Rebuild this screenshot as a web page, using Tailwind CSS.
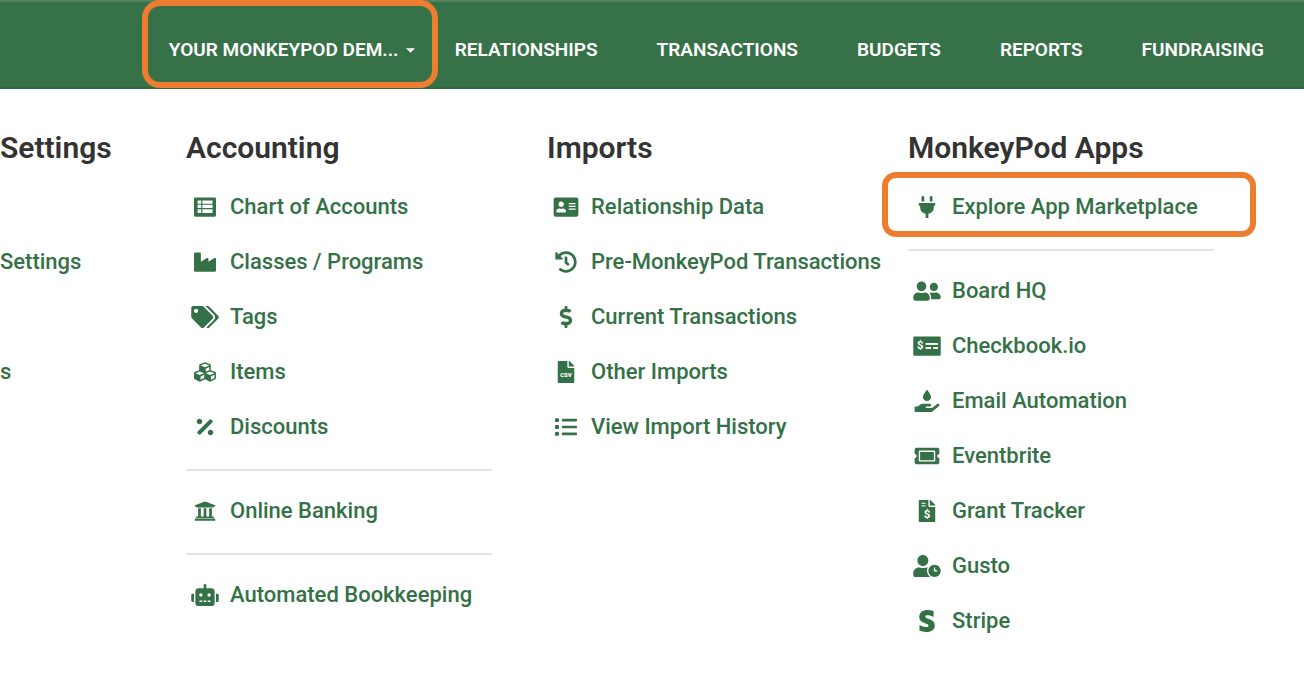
<!DOCTYPE html>
<html lang="en">
<head>
  <meta charset="UTF-8" />
  <meta name="viewport" content="width=device-width, initial-scale=1.0" />
  <title>MonkeyPod</title>
  <script src="https://cdn.jsdelivr.net/npm/@tailwindcss/browser@4"></script>
</head>
<body class="bg-white font-['Roboto',sans-serif] text-[#357147] overflow-x-hidden">
  <header class="h-[89px] flex items-start justify-end pr-10 bg-[#367147] border-b-2 border-[#2f6a40] shadow-[inset_0_2px_0_#56835f] text-white text-[19px] font-semibold">
    <button type="button" class="h-[88px] w-[296px] mr-[17px] pt-3 pl-[21px] flex items-center text-left border-6 border-[#ed7d31] rounded-[18px]">
      YOUR MONKEYPOD DEM...
      <svg class="w-[9px] h-[5px] ml-2" viewBox="0 0 10 5" fill="currentColor" aria-hidden="true"><path d="M0 0h10L5 5z"/></svg>
    </button>
    <nav class="h-[88px] pt-3 flex items-center gap-[59px]">
      <a href="#">RELATIONSHIPS</a>
      <a href="#">TRANSACTIONS</a>
      <a href="#">BUDGETS</a>
      <a href="#">REPORTS</a>
      <a href="#">FUNDRAISING</a>
    </nav>
  </header>

  <main class="pt-10 grid grid-cols-[186fr_361fr_361fr_396fr] text-[22px] font-medium whitespace-nowrap">
    <!-- Settings -->
    <section>
      <h2 class="h-[50px] leading-[38px] text-[30px] font-semibold text-[#333]">Settings</h2>
      <ul>
        <li class="h-[55px]"></li>
        <li><a href="#" class="h-[55px] flex items-center">Settings</a></li>
        <li class="h-[55px]"></li>
        <li><a href="#" class="h-[55px] flex items-center">s</a></li>
      </ul>
    </section>

    <!-- Accounting -->
    <section>
      <h2 class="h-[50px] leading-[38px] text-[30px] font-semibold text-[#333]">Accounting</h2>
      <ul>
        <li><a href="#" class="h-[55px] pl-[5px] flex items-center gap-[11px]">
          <svg class="w-7 h-[22px]" viewBox="0 0 512 512" fill="currentColor" fill-rule="evenodd" aria-hidden="true"><path d="M30 32h452a30 30 0 0 1 30 30v388a30 30 0 0 1-30 30H30a30 30 0 0 1-30-30V62a30 30 0 0 1 30-30zM84 104v74h84v-74zM194 104v74h238v-74zM84 206v74h84v-74zM194 206v74h238v-74zM84 308v88h84v-88zM194 308v88h238v-88z"/></svg>
          Chart of Accounts</a></li>
        <li><a href="#" class="h-[55px] pl-[5px] flex items-center gap-[11px]">
          <svg class="w-7 h-[22px]" viewBox="0 0 512 512" fill="currentColor" aria-hidden="true"><path d="M475.115 163.781L336 252.309v-68.28c0-18.916-20.931-30.399-36.885-20.248L160 252.309V56c0-13.255-10.745-24-24-24H24C10.745 32 0 42.745 0 56v400c0 13.255 10.745 24 24 24h464c13.255 0 24-10.745 24-24V184.029c0-18.917-20.931-30.399-36.885-20.248z"/></svg>
          Classes / Programs</a></li>
        <li><a href="#" class="h-[55px] pl-[5px] flex items-center gap-[11px]">
          <svg class="w-7 h-[22px]" viewBox="0 0 640 512" fill="currentColor" aria-hidden="true"><path d="M497.941 225.941L286.059 14.059A48 48 0 0 0 252.118 0H48C21.49 0 0 21.49 0 48v204.118a48 48 0 0 0 14.059 33.941l211.882 211.882c18.744 18.745 49.136 18.746 67.882 0l204.118-204.118c18.745-18.745 18.745-49.137 0-67.882zM112 160c-26.51 0-48-21.49-48-48s21.49-48 48-48 48 21.49 48 48-21.49 48-48 48zm513.941 133.823L421.823 497.941c-18.745 18.745-49.137 18.745-67.882 0l-.36-.36L527.64 323.522c16.999-16.999 26.36-39.6 26.36-63.64s-9.362-46.641-26.36-63.64L331.397 0h48.721a48 48 0 0 1 33.941 14.059l211.882 211.882c18.745 18.745 18.745 49.137 0 67.882z"/></svg>
          Tags</a></li>
        <li><a href="#" class="h-[55px] pl-[5px] flex items-center gap-[11px]">
          <svg class="w-7 h-[22px]" viewBox="0 0 512 512" fill="currentColor" aria-hidden="true"><path d="M488.6 250.2L392 214V105.5c0-15-9.3-28.4-23.4-33.7l-100-37.5c-8.1-3.1-17.1-3.1-25.3 0l-100 37.5c-14.1 5.3-23.4 18.7-23.4 33.7V214l-96.6 36.2C9.3 255.5 0 268.9 0 283.9V394c0 13.6 7.7 26.1 19.9 32.2l100 50c10.1 5.1 22.1 5.1 32.2 0l103.9-52 103.9 52c10.1 5.1 22.1 5.1 32.2 0l100-50c12.2-6.1 19.9-18.6 19.9-32.2V283.9c0-15-9.3-28.4-23.4-33.7zM358 214.8l-85 31.9v-68.2l85-37v73.3zM154 104.1l102-38.2 102 38.2v.6l-102 41.4-102-41.4v-.6zm84 291.1l-85 42.5v-79.1l85-38.8v75.4zm0-112l-102 41.4-102-41.4v-.6l102-38.2 102 38.2v.6zm240 112l-85 42.5v-79.1l85-38.8v75.4zm0-112l-102 41.4-102-41.4v-.6l102-38.2 102 38.2v.6z"/></svg>
          Items</a></li>
        <li><a href="#" class="h-[55px] pl-[5px] flex items-center gap-[11px]">
          <svg class="w-7 h-[22px]" viewBox="0 0 384 512" fill="currentColor" aria-hidden="true"><path d="M109.25 173.25c24.99-24.99 24.99-65.52 0-90.51-24.99-24.99-65.52-24.99-90.51 0-24.99 24.99-24.99 65.52 0 90.51 25 25 65.52 25 90.51 0zm256 165.49c-24.99-24.99-65.52-24.99-90.51 0-24.99 24.99-24.99 65.52 0 90.51 24.99 24.99 65.52 24.99 90.51 0 25-24.99 25-65.51 0-90.51zm-1.94-231.43l-22.62-22.62c-12.5-12.5-32.76-12.5-45.25 0L20.69 359.44c-12.5 12.5-12.5 32.76 0 45.25l22.62 22.62c12.5 12.5 32.76 12.5 45.25 0l274.75-274.75c12.5-12.49 12.5-32.75 0-45.25z"/></svg>
          Discounts</a></li>
      </ul>
      <hr class="w-[306px] mt-[15px] mb-3 border-t-2 border-[#e3e3e3]" />
      <a href="#" class="h-[55px] pl-[5px] flex items-center gap-[11px]">
        <svg class="w-7 h-[22px]" viewBox="0 0 512 512" fill="currentColor" aria-hidden="true"><path d="M496 128v16a8 8 0 0 1-8 8h-24v12c0 6.627-5.373 12-12 12H60c-6.627 0-12-5.373-12-12v-12H24a8 8 0 0 1-8-8v-16a8 8 0 0 1 4.941-7.392l232-88a7.996 7.996 0 0 1 6.118 0l232 88A8 8 0 0 1 496 128zm-24 304H40c-13.255 0-24 10.745-24 24v16a8 8 0 0 0 8 8h464a8 8 0 0 0 8-8v-16c0-13.255-10.745-24-24-24zM96 192v192H60c-6.627 0-12 5.373-12 12v20h416v-20c0-6.627-5.373-12-12-12h-36V192h-64v192h-64V192h-64v192h-64V192H96z"/></svg>
        Online Banking</a>
      <hr class="w-[306px] mt-[15px] mb-3 border-t-2 border-[#e3e3e3]" />
      <a href="#" class="h-[55px] pl-[5px] flex items-center gap-[11px]">
        <svg class="w-7 h-[22px]" viewBox="0 0 640 512" fill="currentColor" aria-hidden="true"><path d="M32,224H64V416H32A31.96166,31.96166,0,0,1,0,384V256A31.96166,31.96166,0,0,1,32,224Zm512-48V448a64.06328,64.06328,0,0,1-64,64H160a64.06328,64.06328,0,0,1-64-64V176a79.974,79.974,0,0,1,80-80H288V32a32,32,0,0,1,64,0V96H464A79.974,79.974,0,0,1,544,176ZM264,256a40,40,0,1,0-40,40A39.997,39.997,0,0,0,264,256Zm-8,128H192v32h64Zm96,0H288v32h64ZM456,256a40,40,0,1,0-40,40A39.997,39.997,0,0,0,456,256Zm-8,128H384v32h64ZM640,256V384a31.96166,31.96166,0,0,1-32,32H576V224h32A31.96166,31.96166,0,0,1,640,256Z"/></svg>
        Automated Bookkeeping</a>
    </section>

    <!-- Imports -->
    <section>
      <h2 class="h-[50px] leading-[38px] text-[30px] font-semibold text-[#333]">Imports</h2>
      <ul>
        <li><a href="#" class="h-[55px] pl-[5px] flex items-center gap-[11px]">
          <svg class="w-7 h-[22px]" viewBox="0 0 576 512" fill="currentColor" aria-hidden="true"><path d="M528 32H48C21.500 32 0 53.500 0 80v352c0 26.500 21.500 48 48 48h480c26.500 0 48-21.500 48-48V80c0-26.500-21.500-48-48-48zm-352 96c35.300 0 64 28.700 64 64s-28.700 64-64 64-64-28.700-64-64 28.700-64 64-64zm112 236.800c0 10.600-10 19.200-22.400 19.200H86.400C74 384 64 375.400 64 364.800v-19.200c0-31.800 30.100-57.600 67.200-57.600h5c12.300 5.100 25.700 8 39.800 8s27.600-2.900 39.800-8h5c37.100 0 67.200 25.800 67.200 57.600v19.200zM512 312c0 4.400-3.600 8-8 8H360c-4.400 0-8-3.600-8-8v-16c0-4.400 3.600-8 8-8h144c4.400 0 8 3.600 8 8v16zm0-64c0 4.400-3.600 8-8 8H360c-4.400 0-8-3.600-8-8v-16c0-4.400 3.600-8 8-8h144c4.400 0 8 3.600 8 8v16zm0-64c0 4.400-3.600 8-8 8H360c-4.400 0-8-3.600-8-8v-16c0-4.400 3.600-8 8-8h144c4.400 0 8 3.600 8 8v16z"/></svg>
          Relationship Data</a></li>
        <li><a href="#" class="h-[55px] pl-[5px] flex items-center gap-[11px]">
          <svg class="w-7 h-[22px]" viewBox="0 0 512 512" fill="currentColor" aria-hidden="true"><path d="M504 255.531c.253 136.640-111.180 248.372-247.820 248.468-59.015.042-113.223-20.530-155.822-54.911-11.077-8.940-11.905-25.541-1.839-35.607l11.267-11.267c8.609-8.609 22.353-9.551 31.891-1.984C173.062 425.135 212.781 440 256 440c101.705 0 184-82.311 184-184 0-101.705-82.311-184-184-184-48.814 0-93.149 18.969-126.068 49.932l50.754 50.754c10.080 10.080 2.941 27.314-11.313 27.314H24c-8.837 0-16-7.163-16-16V38.627c0-14.254 17.234-21.393 27.314-11.314l49.372 49.372C129.209 34.136 189.552 8 256 8c136.810 0 247.747 110.780 248 247.531zm-180.912 78.784l9.823-12.630c8.138-10.463 6.253-25.542-4.210-33.679L288 256.349V152c0-13.255-10.745-24-24-24h-16c-13.255 0-24 10.745-24 24v135.651l65.409 50.874c10.463 8.137 25.541 6.253 33.679-4.210z"/></svg>
          Pre-MonkeyPod Transactions</a></li>
        <li><a href="#" class="h-[55px] pl-[5px] flex items-center gap-[11px]">
          <svg class="w-7 h-[22px]" viewBox="0 0 288 512" fill="currentColor" aria-hidden="true"><path d="M209.200 233.400l-108-31.600C88.700 198.200 80 186.500 80 173.500c0-16.300 13.200-29.500 29.500-29.500h66.300c12.200 0 24.200 3.700 34.200 10.500 6.100 4.100 14.300 3.100 19.500-2l34.800-34c7.100-6.900 6.100-18.400-1.800-24.500C238 74.800 207.400 64.100 176 64V16c0-8.800-7.200-16-16-16h-32c-8.800 0-16 7.200-16 16v48h-2.500C45.800 64-5.400 118.700.5 183.600c4.200 46.100 39.400 83.600 83.800 96.600l102.500 30c12.500 3.700 21.200 15.300 21.200 28.300 0 16.300-13.200 29.500-29.500 29.500h-66.300C100 368 88 364.300 78 357.500c-6.100-4.100-14.300-3.100-19.500 2l-34.800 34c-7.100 6.900-6.100 18.400 1.800 24.500 24.500 19.200 55.100 29.900 86.500 30v48c0 8.800 7.200 16 16 16h32c8.800 0 16-7.200 16-16v-48.200c46.600-.9 90.300-28.600 105.700-72.700 21.500-61.600-14.600-124.800-72.500-141.700z"/></svg>
          Current Transactions</a></li>
        <li><a href="#" class="h-[55px] pl-[5px] flex items-center gap-[11px]">
          <svg class="w-7 h-[22px]" viewBox="0 0 384 512" fill="currentColor" aria-hidden="true"><path d="M224 136V0H24C10.700 0 0 10.700 0 24v464c0 13.300 10.700 24 24 24h336c13.300 0 24-10.700 24-24V160H248c-13.200 0-24-10.800-24-24zM384 121.900v6.100H256V0h6.100c6.400 0 12.500 2.500 17 7l97.900 98c4.500 4.500 7 10.600 7 16.900z"/><text x="192" y="368" text-anchor="middle" font-size="140" font-weight="900" fill="#fff">CSV</text></svg>
          Other Imports</a></li>
        <li><a href="#" class="h-[55px] pl-[5px] flex items-center gap-[11px]">
          <svg class="w-7 h-[22px]" viewBox="0 0 512 512" fill="currentColor" aria-hidden="true"><rect y="52" width="92" height="88" rx="18"/><rect y="212" width="92" height="88" rx="18"/><rect y="372" width="92" height="88" rx="18"/><rect x="160" y="66" width="352" height="60" rx="16"/><rect x="160" y="226" width="352" height="60" rx="16"/><rect x="160" y="386" width="352" height="60" rx="16"/></svg>
          View Import History</a></li>
      </ul>
    </section>

    <!-- Apps -->
    <section>
      <h2 class="h-[50px] leading-[38px] text-[30px] font-semibold text-[#333]">MonkeyPod Apps</h2>
      <a href="#" class="relative h-[55px] pl-[5px] flex items-center gap-[11px]">
        <span class="absolute -top-[7px] -left-[26px] w-[374px] h-[65px] border-6 border-[#ed7d31] rounded-[14px]"></span>
        <svg class="w-7 h-[22px]" viewBox="0 0 384 512" fill="currentColor" aria-hidden="true"><path d="M320,32a32,32,0,0,0-64,0v96h64Zm48,128H16A16,16,0,0,0,0,176v32a16,16,0,0,0,16,16H32v32A160.07,160.07,0,0,0,160,412.8V512h64V412.8A160.07,160.07,0,0,0,352,256V224h16a16,16,0,0,0,16-16V176A16,16,0,0,0,368,160ZM128,32a32,32,0,0,0-64,0v96h64Z"/></svg>
        Explore App Marketplace</a>
      <hr class="w-[306px] mt-[15px] mb-3 border-t-2 border-[#e3e3e3]" />
      <ul>
        <li><a href="#" class="h-[55px] pl-[5px] flex items-center gap-[11px]">
          <svg class="w-7 h-[22px]" viewBox="0 0 640 512" fill="currentColor" aria-hidden="true"><path d="M192 256c61.900 0 112-50.100 112-112S253.900 32 192 32 80 82.100 80 144s50.100 112 112 112zm76.800 32h-8.300c-20.800 10-43.900 16-68.500 16s-47.600-6-68.500-16h-8.300C51.600 288 0 339.600 0 403.200V432c0 26.500 21.500 48 48 48h288c26.500 0 48-21.500 48-48v-28.800c0-63.600-51.600-115.200-115.200-115.200zM480 256c53 0 96-43 96-96s-43-96-96-96-96 43-96 96 43 96 96 96zm48 32h-3.800c-13.900 4.800-28.600 8-44.200 8s-30.300-3.200-44.200-8H432c-20.400 0-39.200 5.900-55.700 15.400 24.400 26.300 39.700 61.200 39.700 99.800v38.400c0 2.200-.5 4.300-.6 6.400H592c26.500 0 48-21.500 48-48 0-61.900-50.100-112-112-112z"/></svg>
          Board HQ</a></li>
        <li><a href="#" class="h-[55px] pl-[5px] flex items-center gap-[11px]">
          <svg class="w-7 h-[22px]" viewBox="0 0 640 512" fill="currentColor" aria-hidden="true"><rect y="32" width="640" height="448" rx="24"/><g fill="#fff"><text x="164" y="336" text-anchor="middle" font-size="260" font-weight="700">$</text><rect x="288" y="186" width="288" height="44"/><rect x="288" y="280" width="128" height="44"/><rect x="464" y="280" width="112" height="44"/></g></svg>
          Checkbook.io</a></li>
        <li><a href="#" class="h-[55px] pl-[5px] flex items-center gap-[11px]">
          <svg class="w-7 h-[22px]" viewBox="0 0 576 512" fill="currentColor" aria-hidden="true"><path d="M288 256c53 0 96-42.100 96-94 0-40-57.100-120.700-83.200-155.600a16.100 16.100 0 0 0-25.600 0C249.100 41.300 192 122 192 162c0 51.900 43 94 96 94zM565.300 328.100c-11.800-10.700-30.200-10-42.600 0L430.300 402c-11.300 9.100-25.400 14-40 14H272c-8.800 0-16-7.200-16-16s7.200-16 16-16h78.300c15.900 0 30.700-10.900 33.300-26.600 3.300-20-12.100-37.400-31.600-37.400H192c-27 0-53.100 9.300-74.100 26.300L71.400 384H16c-8.800 0-16 7.200-16 16v96c0 8.800 7.200 16 16 16h356.800c14.500 0 28.600-4.900 40-14L564 377c15.200-12.100 16.400-35.300 1.300-48.900z"/></svg>
          Email Automation</a></li>
        <li><a href="#" class="h-[55px] pl-[5px] flex items-center gap-[11px]">
          <svg class="w-7 h-[22px]" viewBox="0 0 576 512" fill="currentColor" aria-hidden="true"><path d="M128 160h320v192H128V160zm400 96c0 26.510 21.490 48 48 48v96c0 26.510-21.490 48-48 48H48c-26.510 0-48-21.490-48-48v-96c26.510 0 48-21.490 48-48s-21.490-48-48-48v-96c0-26.510 21.490-48 48-48h480c26.510 0 48 21.490 48 48v96c-26.510 0-48 21.490-48 48zm-48-104c0-13.255-10.745-24-24-24H120c-13.255 0-24 10.745-24 24v208c0 13.255 10.745 24 24 24h336c13.255 0 24-10.745 24-24V152z"/></svg>
          Eventbrite</a></li>
        <li><a href="#" class="h-[55px] pl-[5px] flex items-center gap-[11px]">
          <svg class="w-7 h-[22px]" viewBox="0 0 384 512" fill="currentColor" aria-hidden="true"><path d="M224 136V0H24C10.700 0 0 10.700 0 24v464c0 13.300 10.700 24 24 24h336c13.300 0 24-10.700 24-24V160H248c-13.200 0-24-10.800-24-24zM384 121.900v6.100H256V0h6.100c6.400 0 12.500 2.500 17 7l97.900 98c4.500 4.500 7 10.600 7 16.900z"/><g fill="#fff"><rect x="64" y="64" width="96" height="24"/><rect x="64" y="124" width="96" height="24"/><text x="192" y="424" text-anchor="middle" font-size="270" font-weight="700">$</text></g></svg>
          Grant Tracker</a></li>
        <li><a href="#" class="h-[55px] pl-[5px] flex items-center gap-[11px]">
          <svg class="w-7 h-[22px]" viewBox="0 0 640 512" fill="currentColor" aria-hidden="true"><path d="M496 224c-79.600 0-144 64.400-144 144s64.400 144 144 144 144-64.400 144-144-64.400-144-144-144zm64 150.300c0 5.300-4.400 9.700-9.700 9.700h-60.600c-5.300 0-9.700-4.400-9.700-9.700v-76.600c0-5.300 4.400-9.700 9.700-9.700h12.600c5.300 0 9.700 4.400 9.700 9.700V352h38.300c5.300 0 9.700 4.400 9.700 9.700v12.600zM320 368c0-27.800 6.700-54.100 18.200-77.500-8-1.500-16.200-2.500-24.600-2.500h-16.700c-22.200 10.200-46.900 16-72.900 16s-50.600-5.800-72.900-16h-16.700C60.200 288 0 348.200 0 422.400V464c0 26.500 21.500 48 48 48h347.100c-45.300-31.900-75.100-84.500-75.100-144zm-96-112c70.700 0 128-57.300 128-128S294.700 0 224 0 96 57.300 96 128s57.300 128 128 128z"/></svg>
          Gusto</a></li>
        <li><a href="#" class="h-[55px] pl-[5px] flex items-center gap-[11px]">
          <svg class="w-7 h-[22px]" viewBox="0 0 384 512" fill="currentColor" aria-hidden="true"><path d="M155.300 154.600c0-22.300 18.600-30.900 48.400-30.900 43.400 0 98.500 13.300 141.900 36.700V26.100C298.300 7.200 251.100 0 203.800 0 88.100 0 11 60.400 11 161.400c0 157.900 216.800 132.300 216.800 200.400 0 26.400-22.900 34.900-54.700 34.900-47.200 0-108.200-19.500-156.100-45.500v128.500a396.090 396.090 0 0 0 156 32.400c118.600 0 200.300-51 200.300-153.600 0-170.200-218-139.700-218-203.900z"/></svg>
          Stripe</a></li>
      </ul>
    </section>
  </main>
</body>
</html>
